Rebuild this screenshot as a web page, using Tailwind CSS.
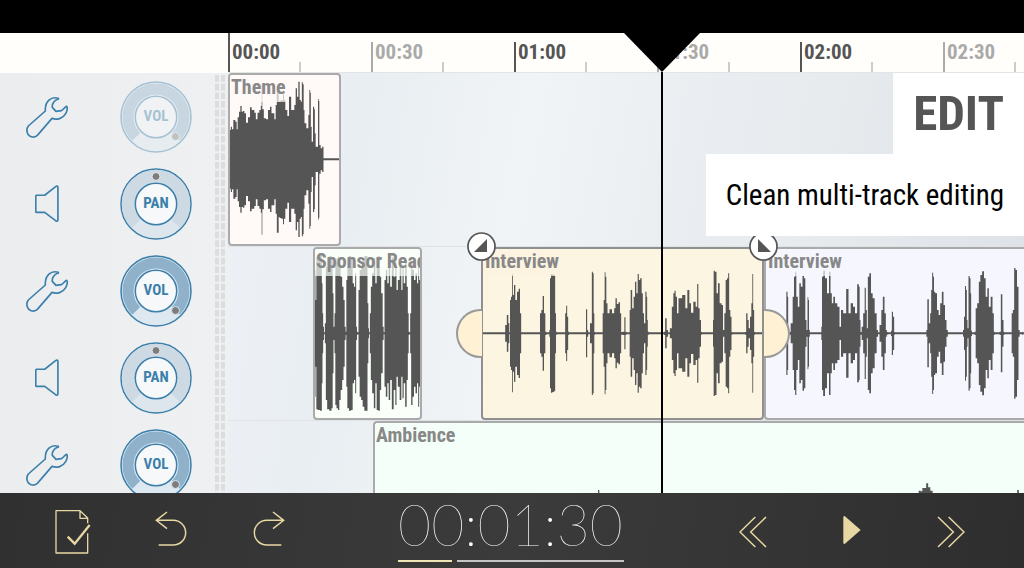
<!DOCTYPE html>
<html lang="en">
<head>
    <meta charset="UTF-8">
    <meta name="viewport" content="width=device-width, initial-scale=1.0">
    <title>Multi-track Editor</title>
    <script src="https://cdn.jsdelivr.net/npm/@tailwindcss/browser@4"></script>
</head>
<body class="h-screen flex flex-col overflow-hidden bg-black font-['Liberation_Sans_Narrow','Roboto_Condensed','Roboto',sans-serif]">
    <!-- Shared icons -->
    <svg class="hidden">
        <symbol id="wrench" viewBox="0 0 126 126">
            <path d="M97 7C76 0 56 16 58 45L7 90C-2 102 4 121 19 123C26 124 32 121 36 116L78 67C92 73 111 68 119 53C124 43 125 35 122 31C118 30 112 42 106 44L90 46L79 34C77 22 86 13 95 10Q98 9 97 7Z" fill="none" stroke="#3b7fab" stroke-width="5" stroke-linejoin="round"/>
        </symbol>
        <symbol id="speaker" viewBox="0 0 72 112">
            <path d="M5 31Q2 31 2 34V80Q2 83 5 83H29L62 108Q69 112 69 105V7Q69 0 62 5L29 31Z" fill="none" stroke="#3b7fab" stroke-width="5" stroke-linejoin="round"/>
        </symbol>
        <symbol id="knob-vol" viewBox="0 0 72 72">
            <circle cx="36" cy="36" r="35" fill="#dde8f0" stroke="#3b7fab" stroke-width="1.5"/>
            <path d="M16.2 55.8A28 28 0 1 1 55.8 55.8" fill="none" stroke="#8fb2ca" stroke-width="11"/>
            <circle cx="36" cy="36" r="20.7" fill="#f7f8f9" stroke="#3b7fab" stroke-width="1.5"/>
            <circle cx="55.5" cy="55.5" r="4" fill="#7d7d7d" stroke="#dde8f0"/>
        </symbol>
        <symbol id="knob-pan" viewBox="0 0 72 72">
            <circle cx="36" cy="36" r="35" fill="#dde6ec" stroke="#3b7fab" stroke-width="1.5"/>
            <path d="M16.2 55.8A28 28 0 1 1 55.8 55.8" fill="none" stroke="#cddae4" stroke-width="12.5"/>
            <circle cx="36" cy="36" r="20.7" fill="#f7f8f9" stroke="#3b7fab" stroke-width="1.5"/>
            <circle cx="36" cy="8.5" r="4" fill="#7d7d7d" stroke="#e8edf0"/>
        </symbol>
        <symbol id="grip" viewBox="0 0 10 174">
            <path d="M2 2V174M8 2V174" stroke="#dcdddf" stroke-width="4" stroke-dasharray="6.7 2"/>
        </symbol>
    </svg>

    <div class="h-[33px] shrink-0 bg-black"></div>

    <main class="flex flex-1 min-h-0">
        <!-- Track controls -->
        <aside class="w-[228px] shrink-0 flex flex-col overflow-hidden bg-[linear-gradient(90deg,#ebedef,#eff0f1)]">
            <div class="h-10 shrink-0 bg-[#fffefa]"></div>
            <div class="flex h-[174px] shrink-0">
                <div class="flex-1">
                    <div class="flex items-center h-[87px]">
                        <button aria-label="Track settings" class="w-[93px] flex justify-center"><svg class="w-[42px] h-[42px]"><use href="#wrench"/></svg></button>
                        <button class="grid place-items-center ml-[27px] opacity-40">
                            <svg class="[grid-area:1/1] w-[72px] h-[72px]"><use href="#knob-vol"/></svg>
                            <span class="[grid-area:1/1] text-[15px] leading-none font-bold text-[#3b7fab]">VOL</span>
                        </button>
                    </div>
                    <div class="flex items-center h-[87px]">
                        <button aria-label="Mute" class="w-[93px] flex justify-center"><svg class="w-6 h-[37px]"><use href="#speaker"/></svg></button>
                        <button class="grid place-items-center ml-[27px]">
                            <svg class="[grid-area:1/1] w-[72px] h-[72px]"><use href="#knob-pan"/></svg>
                            <span class="[grid-area:1/1] text-[15px] leading-none font-bold text-[#3b7fab]">PAN</span>
                        </button>
                    </div>
                </div>
                <svg class="w-[10px] h-[174px] mr-[3px]"><use href="#grip"/></svg>
            </div>
            <div class="flex h-[174px] shrink-0">
                <div class="flex-1">
                    <div class="flex items-center h-[87px]">
                        <button aria-label="Track settings" class="w-[93px] flex justify-center"><svg class="w-[42px] h-[42px]"><use href="#wrench"/></svg></button>
                        <button class="grid place-items-center ml-[27px]">
                            <svg class="[grid-area:1/1] w-[72px] h-[72px]"><use href="#knob-vol"/></svg>
                            <span class="[grid-area:1/1] text-[15px] leading-none font-bold text-[#3b7fab]">VOL</span>
                        </button>
                    </div>
                    <div class="flex items-center h-[87px]">
                        <button aria-label="Mute" class="w-[93px] flex justify-center"><svg class="w-6 h-[37px]"><use href="#speaker"/></svg></button>
                        <button class="grid place-items-center ml-[27px]">
                            <svg class="[grid-area:1/1] w-[72px] h-[72px]"><use href="#knob-pan"/></svg>
                            <span class="[grid-area:1/1] text-[15px] leading-none font-bold text-[#3b7fab]">PAN</span>
                        </button>
                    </div>
                </div>
                <svg class="w-[10px] h-[174px] mr-[3px]"><use href="#grip"/></svg>
            </div>
            <div class="flex h-[174px] shrink-0">
                <div class="flex-1">
                    <div class="flex items-center h-[87px]">
                        <button aria-label="Track settings" class="w-[93px] flex justify-center"><svg class="w-[42px] h-[42px]"><use href="#wrench"/></svg></button>
                        <button class="grid place-items-center ml-[27px]">
                            <svg class="[grid-area:1/1] w-[72px] h-[72px]"><use href="#knob-vol"/></svg>
                            <span class="[grid-area:1/1] text-[15px] leading-none font-bold text-[#3b7fab]">VOL</span>
                        </button>
                    </div>
                </div>
                <svg class="w-[10px] h-[174px] mr-[3px]"><use href="#grip"/></svg>
            </div>
        </aside>

        <!-- Timeline -->
        <section class="relative flex-1 min-w-0 flex flex-col overflow-hidden bg-[linear-gradient(100deg,#eef1f5_0%,#e9eef2_17%,#f0f4f6_36%,#e9edf1_58%,#e7ebee_70%,#dce1e7_100%)]">
            <div class="flex items-end h-10 shrink-0 overflow-hidden bg-[#fffefa] text-[21px] leading-5 font-bold border-b border-[#e3e5e5]">
                <div class="w-[71px] h-full shrink-0 border-l-2 border-[#555] pl-0.5 pt-[9px] text-[#555]">00:00</div>
                <div class="w-[72px] h-[10px] shrink-0 border-l-2 border-[#ccc]"></div>
                <div class="w-[71px] h-[30px] shrink-0 border-l-2 border-[#aaa] pl-0.5 text-[#aaa]">00:30</div>
                <div class="w-[72px] h-[10px] shrink-0 border-l-2 border-[#ccc]"></div>
                <div class="w-[71px] h-[30px] shrink-0 border-l-2 border-[#555] pl-0.5 text-[#555]">01:00</div>
                <div class="w-[72px] h-[10px] shrink-0 border-l-2 border-[#ccc]"></div>
                <div class="w-[71px] h-[30px] shrink-0 border-l-2 border-[#aaa] pl-0.5 text-[#aaa]">01:30</div>
                <div class="w-[72px] h-[10px] shrink-0 border-l-2 border-[#ccc]"></div>
                <div class="w-[71px] h-[30px] shrink-0 border-l-2 border-[#555] pl-0.5 text-[#555]">02:00</div>
                <div class="w-[72px] h-[10px] shrink-0 border-l-2 border-[#ccc]"></div>
                <div class="w-[71px] h-[30px] shrink-0 border-l-2 border-[#aaa] pl-0.5 text-[#aaa]">02:30</div>
                <div class="w-[72px] h-[10px] shrink-0 border-l-2 border-[#ccc]"></div>
            </div>

            <div class="flex h-[174px] shrink-0 items-start border-b border-[#dfe3e6]">
                <div class="grid w-[113px] h-[173px] overflow-hidden rounded border-2 border-[#aaa] bg-[#fff9f8]">
                    <svg class="[grid-area:1/1] w-[113px] h-[173px] -ml-0.5 -mt-0.5" viewBox="0 0 339 519"><path data-shift="-9" data-end="345" data-peaks="15,88 20,98 22,90 28,118 34,113 36,90 40,126 44,143 48,160 52,143 56,145 60,138 66,110 72,126 78,156 82,148 86,148 90,140 95,120 100,140 106,148 109,160 111,226 113,150 120,123 126,120 132,148 138,158 141,138 146,138 150,120 154,163 157,220 160,220 162,173 166,176 172,178 176,195 178,178 184,148 190,130 194,188 197,188 200,148 206,148 210,163 214,213 218,188 222,233 226,178 229,173 232,231 235,225 237,148 240,108 248,93 252,133 254,208 257,200 258,98 262,53 266,158 269,150 270,78 274,38 278,38 280,181 282,175 284,43 290,33 293,38 298,3" fill="#555"/></svg>
                    <h3 class="[grid-area:1/1] self-start justify-self-start h-[27px] bg-[#fff9f8]/70 px-px text-[20px] leading-6 font-bold text-[#888] whitespace-nowrap">Theme</h3>
                </div>
            </div>

            <div class="flex h-[174px] shrink-0 items-start border-b border-[#dfe3e6]">
                <div class="grid grid-cols-[105px] ml-[85px] w-[109px] h-[173px] shrink-0 overflow-hidden rounded border-2 border-[#aaa] bg-[#fafff9]">
                    <svg class="[grid-area:1/1] w-[109px] h-[173px] -ml-0.5 -mt-0.5" viewBox="0 0 327 519"><path data-shift="-39" data-end="367" data-peaks="45,190 48,100 50,228 56,230 64,232 67,150 68,60 71,20 73,3 76,30 79,200 84,228 92,232 97,225 99,120 102,20 105,60 107,215 112,225 116,230 120,200 124,170 129,140 132,100 136,20 138,5 140,160 144,225 150,232 156,230 160,150 164,140 167,180 170,20 172,5 174,3 177,130 181,190 186,200 190,220 196,232 201,232 204,90 206,15 208,3 211,60 214,140 219,180 224,225 228,150 232,230 238,232 241,170 246,120 250,20 252,3 255,160 260,190 264,150 268,200 273,140 278,228 284,170 288,215 291,130 296,160 302,200 306,130 309,195 313,150 318,220 322,140 325,60 327,5 329,3 332,60 335,215 340,190 344,160 349,180 353,150 356,220 359,160 361,3" fill="#555"/></svg>
                    <h3 class="[grid-area:1/1] self-start h-[27px] overflow-hidden bg-[#fafff9]/70 px-px text-[20px] leading-6 font-bold text-[#888] whitespace-nowrap">Sponsor Read</h3>
                </div>

                <!-- Selected clip, with trim handles and fade buttons -->
                <div class="relative z-10 ml-[59px] w-[283px] h-[173px] shrink-0">
                    <button aria-label="Trim start" class="absolute -left-[25px] top-[62px] w-[26px] h-[49px] rounded-l-full border-2 border-r-0 border-[#999] bg-[#fff1d3]"></button>
                    <button aria-label="Trim end" class="absolute -right-[26px] top-[62px] w-[26px] h-[49px] rounded-r-full border-2 border-l-0 border-[#999] bg-[#fff1d3]"></button>
                    <div class="grid h-full overflow-hidden rounded border-2 border-[#909090] bg-[#fcf5e1]">
                        <svg class="[grid-area:1/1] w-[283px] h-[173px] -ml-0.5 -mt-0.5" viewBox="0 0 849 519"><path data-shift="-93" data-end="942" data-peaks="163,3 168,25 173,55 177,30 179,3 181,100 185,110 187,177 190,115 194,145 198,100 204,125 208,134 212,60 215,3 268,3 272,60 276,70 280,112 284,60 288,5 299,10 301,165 305,178 309,176 314,174 317,60 319,5 344,3 347,60 350,83 353,50 356,5 406,3 410,72 413,10 416,3 424,30 427,185 430,180 432,60 434,4 459,60 463,100 465,183 468,170 470,90 475,60 482,72 490,60 495,75 498,105 503,88 508,93 512,60 515,4 521,5 525,48 528,5 540,70 544,130 549,75 553,110 557,155 561,120 565,178 568,160 573,165 577,120 580,60 584,30 588,125 591,110 592,40 595,5 643,5 648,45 652,10 656,3 663,15 668,80 672,120 675,128 679,110 683,60 688,105 695,105 698,115 704,115 708,75 716,130 720,90 726,62 734,95 740,80 743,148 747,75 751,40 755,4 790,40 792,188 797,185 802,120 806,150 812,90 817,85 821,10 825,60 829,160 833,165 836,180 839,70 843,50 846,4 886,4 891,60 894,40 898,15 902,50 906,90 908,178 911,70 914,4" fill="#555"/></svg>
                        <h3 class="[grid-area:1/1] self-start justify-self-start h-[27px] bg-[#fcf2e1]/70 px-0.5 text-[20px] leading-6 font-bold text-[#888] whitespace-nowrap">Interview</h3>
                    </div>
                    <button aria-label="Fade in" class="absolute -left-[14px] -top-[15px] w-[29px] h-[29px]">
                        <svg viewBox="0 0 29 29"><circle cx="14.5" cy="14.5" r="13.5" fill="#fff" stroke="#555" stroke-width="1.7"/><path d="M20 7V20H7Z" fill="#555"/></svg>
                    </button>
                    <button aria-label="Fade out" class="absolute -right-[14px] -top-[15px] w-[29px] h-[29px]">
                        <svg viewBox="0 0 29 29"><circle cx="14.5" cy="14.5" r="13.5" fill="#fff" stroke="#555" stroke-width="1.7"/><path d="M9 7V20H22Z" fill="#555"/></svg>
                    </button>
                </div>

                <div class="grid flex-1 min-w-0 h-[173px] overflow-hidden rounded-l border-2 border-r-0 border-[#aaa] bg-[#f6f7fe]">
                    <svg class="[grid-area:1/1] w-[260px] h-[173px] -ml-0.5 -mt-0.5" viewBox="0 0 780 519"><path data-shift="-312" data-end="1092" data-peaks="377,10 381,125 384,110 385,10 388,4 396,30 400,110 404,170 407,185 411,110 416,80 420,150 425,140 430,172 434,165 438,40 441,10 444,108 446,100 448,10 451,3 485,20 487,170 492,188 498,165 504,120 510,185 513,120 518,90 522,110 528,90 536,80 541,20 545,70 554,60 563,133 568,60 576,90 582,80 588,60 595,147 598,140 600,40 603,4 607,20 612,60 616,137 619,70 622,15 625,170 631,180 635,120 641,105 647,60 653,10 655,3 662,25 666,70 671,110 676,60 679,10 682,4 694,8 697,65 701,50 704,4 800,10 804,102 809,30 812,60 815,130 818,182 821,170 823,125 828,120 834,70 838,55 843,90 848,125 853,85 857,40 862,10 865,3 910,10 914,50 916,142 920,130 921,40 924,15 927,172 931,165 932,120 935,8 945,5 949,75 954,90 959,155 963,175 970,186 974,165 980,110 984,135 989,80 995,110 1000,60 1003,5 1020,5 1025,117 1029,40 1032,5 1056,60 1061,70 1064,196 1069,190 1073,140 1078,10 1088,5" fill="#555"/></svg>
                    <h3 class="[grid-area:1/1] self-start justify-self-start h-[27px] bg-[#f6f7fe]/70 px-0.5 text-[20px] leading-6 font-bold text-[#888] whitespace-nowrap">Interview</h3>
                </div>
            </div>

            <div class="flex h-[174px] shrink-0 items-start">
                <div class="grid ml-[145px] flex-1 min-w-0 h-[173px] overflow-hidden rounded-l border-2 border-r-0 border-[#aaa] bg-[#f5fffa]">
                    <svg class="[grid-area:1/1] w-[651px] h-[173px] -ml-0.5 -mt-0.5" viewBox="0 0 1953 519"><path data-shift="0" data-end="1953" data-peaks="673,30 677,52 681,30 1634,30 1640,50 1646,48 1650,58 1656,58 1663,72 1668,60 1676,50 1682,30 1930,30 1935,52 1940,30" fill="#555"/></svg>
                    <h3 class="[grid-area:1/1] self-start justify-self-start h-[27px] px-px text-[20px] leading-6 font-bold text-[#888] whitespace-nowrap">Ambience</h3>
                </div>
            </div>

            <!-- Playhead -->
            <div class="absolute left-[396px] inset-y-0 w-[76px] flex flex-col items-center z-20 pointer-events-none">
                <svg class="w-[76px] h-[39px] shrink-0" viewBox="0 0 76 39"><path d="M0 0H76L38 39Z"/></svg>
                <div class="w-0.5 flex-1 bg-black"></div>
            </div>

            <!-- Caption -->
            <div class="absolute right-0 top-10 z-30 flex flex-col items-end">
                <h1 class="h-[81px] flex items-center bg-white px-5 text-[49px] leading-none font-bold text-[#555]">EDIT</h1>
                <p class="h-[82px] flex items-center bg-white px-5 text-[29px] leading-none text-black whitespace-nowrap">Clean multi-track editing</p>
            </div>
        </section>
    </main>

    <!-- Transport -->
    <footer class="h-[75px] shrink-0 flex items-center justify-between px-6 pt-0.5 bg-[linear-gradient(100deg,#303030,#3b3b3b_50%,#2e2e2e)]">
        <div class="flex">
            <button aria-label="Done" class="w-[98px] flex justify-center">
                <svg class="w-9 h-11" viewBox="0 0 108 132" fill="none" stroke="#e6d7a3" stroke-width="4">
                    <path d="M98 40V24L75 2H3V129H98V70M75 2V25H98" stroke-linejoin="round"/>
                    <path d="M38 80L59 101L104 45" stroke-width="7"/>
                </svg>
            </button>
            <button aria-label="Undo" class="w-[98px] flex justify-center">
                <svg class="w-8 h-9" viewBox="0 0 96 108" fill="none" stroke="#e6d7a3" stroke-width="4.5">
                    <path d="M36 6L4 31L36 56M4 31H55A37 37 0 0 1 55 105H11"/>
                </svg>
            </button>
            <button aria-label="Redo" class="w-[98px] flex justify-center">
                <svg class="w-8 h-9" viewBox="0 0 96 108" fill="none" stroke="#e6d7a3" stroke-width="4.5">
                    <path d="M60 6L92 31L60 56M92 31H41A37 37 0 0 0 41 105H85"/>
                </svg>
            </button>
        </div>
        <div class="flex flex-col items-center gap-2 pb-1.5">
            <time class="font-['Lato',sans-serif] font-thin text-[57px] leading-[56px] text-white">00:01:30</time>
            <div class="flex gap-[5px] w-[226px]">
                <div class="w-[54px] h-0.5 bg-[#efe4b4]"></div>
                <div class="flex-1 h-0.5 bg-[#c4c4c4]"></div>
            </div>
        </div>
        <div class="flex">
            <button aria-label="Rewind" class="w-[99px] flex justify-center">
                <svg class="w-7 h-8" viewBox="0 0 84 96" fill="none" stroke="#e6d7a3" stroke-width="4.5">
                    <path d="M49 3L3 48L49 93M81 3L35 48L81 93"/>
                </svg>
            </button>
            <button aria-label="Play" class="w-[99px] flex justify-center">
                <svg class="w-[18px] h-7" viewBox="0 0 54 84"><path d="M1 3Q1 0 5 0L53 42L5 84Q1 84 1 81Z" fill="#e6d7a3"/></svg>
            </button>
            <button aria-label="Fast forward" class="w-[99px] flex justify-center">
                <svg class="w-7 h-8" viewBox="0 0 84 96" fill="none" stroke="#e6d7a3" stroke-width="4.5">
                    <path d="M3 3L49 48L3 93M35 3L81 48L35 93"/>
                </svg>
            </button>
        </div>
    </footer>

    <script>
        // Mirror each list of peaks around the centre line of its clip
        const mid = 259;
        const quiet = 3;
        document.querySelectorAll('path[data-peaks]').forEach((path) => {
            const shift = Number(path.dataset.shift);
            const end = Number(path.dataset.end) + shift;
            const points = [[0, quiet]];
            path.dataset.peaks.split(' ').forEach((p) => {
                const [x, amp] = p.split(',').map(Number);
                const [lastX] = points[points.length - 1];
                // Silence between two bursts
                if (x + shift - lastX > 9) {
                    points.push([lastX + 2, quiet], [x + shift - 2, quiet]);
                }
                points.push([x + shift, Math.max(amp, quiet)]);
            });
            points.push([points[points.length - 1][0] + 2, quiet]);

            // One bar per peak, reaching halfway to its neighbours
            let d = '';
            points.forEach(([x, amp], i) => {
                const left = i ? (points[i - 1][0] + x) / 2 : 0;
                const right = i < points.length - 1 ? (x + points[i + 1][0]) / 2 : end;
                d += `M${left} ${mid - amp}H${right}V${mid + amp}H${left}Z`;
            });
            path.setAttribute('d', d);
        });
    </script>
</body>
</html>
